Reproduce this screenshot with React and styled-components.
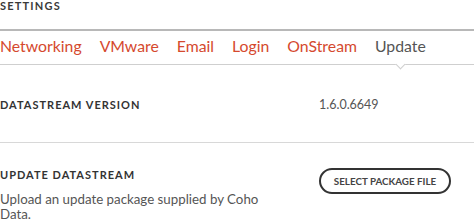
import React from "react";
import styled, { createGlobalStyle } from "styled-components";

const Global = createGlobalStyle`
  html, body { margin: 0; padding: 0; background: #fff; }
  body { font-family: Lato, "Open Sans", sans-serif; overflow: hidden; }
`;

const Page = styled.div`
  width: 474px;
  height: 221px;
  overflow: hidden;
`;

const Title = styled.div`
  font-size: 11px;
  line-height: 11px;
  font-weight: 700;
  letter-spacing: 1.2px;
  color: #3a3a3a;
  height: 29px;
`;

const TabBar = styled.nav`
  display: flex;
  gap: 18px;
  border-top: 2px solid #b8b8b8;
  border-bottom: 1px solid #cfcfcf;
  padding: 4px 0 8px;
`;

const Tab = styled.span`
  position: relative;
  font-size: 15.8px;
  line-height: 21px;
  color: ${(p) => (p.$active ? "#555" : "#d5492e")};
  ${(p) =>
    p.$active &&
    `
    &::after {
      content: "";
      position: absolute;
      left: 50%;
      bottom: -12px;
      width: 6px;
      height: 6px;
      margin-left: -3px;
      background: #fff;
      border-right: 1px solid #cfcfcf;
      border-bottom: 1px solid #cfcfcf;
      transform: rotate(45deg);
    }
  `}
`;

const Row = styled.section`
  display: grid;
  grid-template-columns: 266px 1fr;
  column-gap: 53px;
  align-items: start;
  padding: ${(p) => p.$pad};
  border-bottom: ${(p) => (p.$divider ? "1px solid #d8d8d8" : "none")};
`;

const Label = styled.h3`
  margin: 0;
  font-size: 11px;
  line-height: 14px;
  font-weight: 700;
  letter-spacing: 1px;
  color: #333;
`;

const Value = styled.div`
  font-size: 12.5px;
  line-height: 14px;
  color: #555;
`;

const Desc = styled.p`
  margin: 9.5px 0 0;
  font-size: 13.3px;
  line-height: 15px;
  color: #555;
`;

const Button = styled.button`
  display: block;
  height: 26px;
  width: 132px;
  border: 2px solid #333;
  border-radius: 13px;
  background: #fff;
  font-family: Lato, sans-serif;
  font-size: 9.8px;
  font-weight: 700;
  color: #444;
  padding: 0;
  cursor: pointer;
`;

export default function App() {
  return (
    <Page>
      <Global />
      <Title>SETTINGS</Title>
      <TabBar>
        <Tab>Networking</Tab>
        <Tab>VMware</Tab>
        <Tab>Email</Tab>
        <Tab>Login</Tab>
        <Tab>OnStream</Tab>
        <Tab $active>Update</Tab>
      </TabBar>
      <Row $pad="33px 0 30px" $divider>
        <Label>DATASTREAM VERSION</Label>
        <Value>1.6.0.6649</Value>
      </Row>
      <Row $pad="25px 0 0">
        <div>
          <Label>UPDATE DATASTREAM</Label>
          <Desc>Upload an update package supplied by Coho Data.</Desc>
        </div>
        <div>
          <Button>SELECT PACKAGE FILE</Button>
        </div>
      </Row>
    </Page>
  );
}
